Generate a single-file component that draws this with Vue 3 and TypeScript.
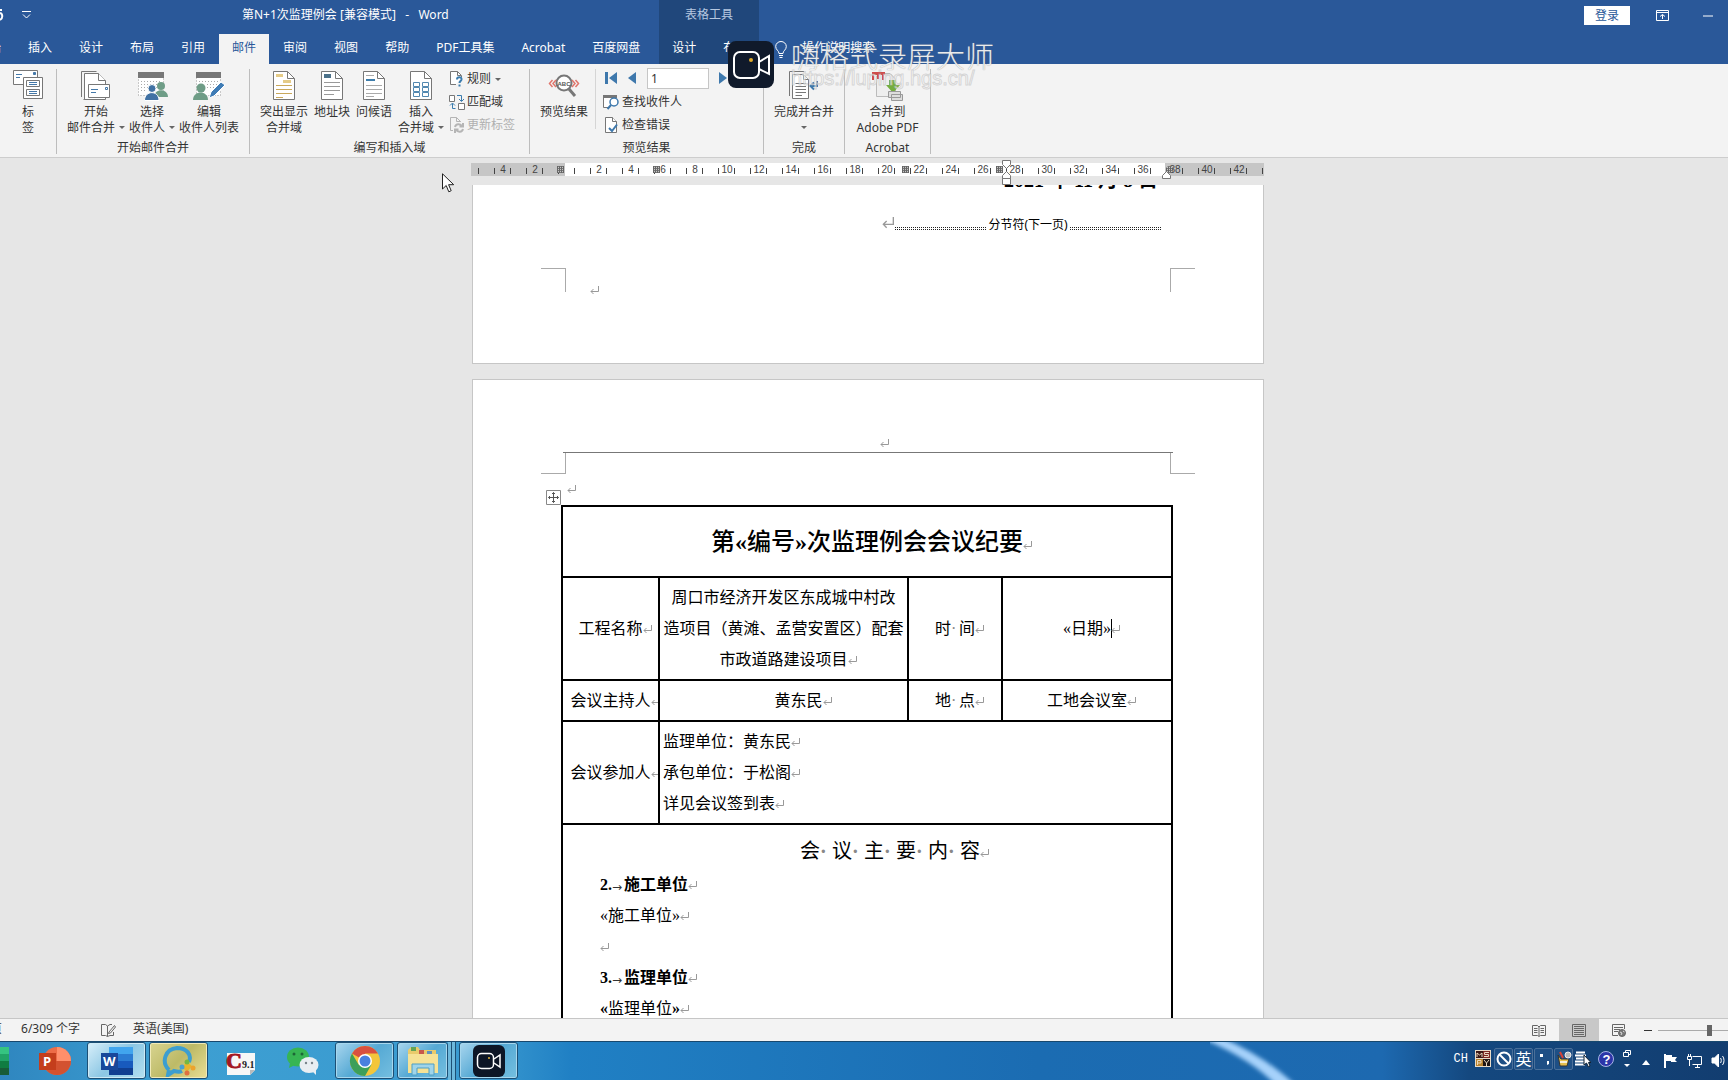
<script setup lang="ts">
import { h, ref } from 'vue'

const mainTabs = ['开始', '插入', '设计', '布局', '引用', '邮件', '审阅', '视图', '帮助', 'PDF工具集', 'Acrobat', '百度网盘']
const activeTab = ref('邮件')
const record = ref('1')
const zoomLevel = ref(50)

// Ruler labels run from -6 to 44 in steps of two; the origin and both ends carry no number.
const rulerCells = Array.from({ length: 26 }, (_, i) => {
  const value = i * 2 - 6
  return value === 0 || value === -6 || value === 44 ? '' : String(Math.abs(value))
})

const attendees = ['监理单位：黄东民', '承包单位：于松阁', '详见会议签到表']
const headingChars = ['会', '议', '主', '要', '内', '容']

// Paragraph mark shown at the end of each paragraph.
const Mark = () =>
  h('svg', { class: 'mark', width: 9, height: 9, viewBox: '0 0 9 9', fill: 'none', stroke: '#999' }, [
    h('path', { d: 'M8.5 0V5.5H1M3.5 3L1 5.5L3.5 8' }),
  ])

const Sheet = () =>
  h('svg', { width: 22, height: 29, viewBox: '0 0 22 29', fill: '#fff', stroke: '#777' }, [
    h('path', { d: 'M.5.5H14.5L21.5 7.5V28.5H.5Z' }),
    h('path', { d: 'M14.5.5V7.5H21.5', fill: 'none' }),
  ])
</script>

<template>
  <div class="app">
    <header class="head">
      <div class="titlebar">
        <div class="quick">
          <svg width="4" height="14" viewBox="0 0 4 14" fill="none" stroke="#fff" stroke-width="2"><path d="M0 2H2M0 12C3 10 3 6 0 5" /></svg>
          <svg class="quick-more" width="9" height="8" viewBox="0 0 9 8" fill="none" stroke="#fff"><path d="M0 .5H9M1 3.5L4.5 7L8 3.5" /></svg>
        </div>
        <div class="doc-title">第N+1次监理例会 [兼容模式]&nbsp;&nbsp; -&nbsp;&nbsp; Word</div>
        <div class="ctx-title">表格工具</div>
        <div class="win">
          <button class="login">登录</button>
          <button class="icon-btn" aria-label="功能区显示选项">
            <svg width="13" height="11" viewBox="0 0 13 11" fill="none" stroke="#fff"><path d="M.5.5H12.5V10.5H.5ZM.5 2.5H12.5M6.5 9V4.5M4 6.5L6.5 4.5L9 6.5" /></svg>
          </button>
          <button class="icon-btn" aria-label="最小化">
            <svg width="10" height="2" viewBox="0 0 10 2"><path d="M0 1H10" stroke="#fff" /></svg>
          </button>
        </div>
      </div>
      <nav class="tabs">
        <button v-for="t in mainTabs" :key="t" class="tab" :class="{ active: t === activeTab }" @click="activeTab = t">{{ t }}</button>
        <div class="ctx-tabs">
          <button class="tab">设计</button>
          <button class="tab">布局</button>
        </div>
        <svg class="bulb" width="12" height="17" viewBox="0 0 12 17" fill="none" stroke="#fff"><path d="M4 12.5C4 9.5.7 9 .7 5.5A5.3 5 0 0 1 11.3 5.5C11.3 9 8 9.5 8 12.5ZM4 14.5H8M4.500 16.500H7.500" /></svg>
        <button class="tell">操作说明搜索</button>
      </nav>
    </header>

    <section class="ribbon">
      <div class="group g-labels">
        <div class="row">
          <button class="big">
            <svg width="32" height="32" viewBox="0 0 32 32" fill="#fff" stroke="#777"><path d="M1.500 1.500H25.500V15.500H1.500Z" /><path d="M4 5.500H10M4 8.500H8" stroke="#4478a8" /><path d="M21.500 3.500H23.500V5.500H21.500Z" fill="#4478a8" stroke="#4478a8" /><path d="M11.500 8.500H30.500V29.500H11.500Z" /><path d="M14.500 11.500H27.500V17.500H14.500ZM14.500 20.500H27.500V26.500H14.500Z" /><path d="M17 13.500H25M17 15.500H25M17 22.500H25M17 24.500H25" stroke="#4478a8" /></svg>
            <span>标<br />签</span>
          </button>
        </div>
      </div>

      <div class="group g-start">
        <div class="row">
          <button class="big">
            <svg width="32" height="32" viewBox="0 0 32 32" fill="#fff" stroke="#777"><path d="M1.500 28V2.500H16.500M5 30.500H3.500" fill="none" /><path d="M4.500 4.500H18.500L25.500 11.500V30.500H4.500Z" /><path d="M18.500 4.500V11.500H25.500" /><path d="M8.500 15.500H29.500V28.500H8.500Z" /><path d="M11 20.500H18M11 23.500H16" stroke="#4478a8" /><path d="M25.500 18.500H27.500V20.500H25.500Z" stroke="#4478a8" /></svg>
            <span>开始<br />邮件合并<i class="caret" /></span>
          </button>
          <button class="big">
            <svg width="32" height="32" viewBox="0 0 32 32"><path d="M2.500 4.500H27.500V26.500H2.500Z" fill="#fff" stroke="#999" stroke-dasharray="1 2" /><path d="M2 3H28V9H2Z" fill="#777" /><path d="M5 12.500H26M5 15.500H26M5 18.500H26M5 21.500H10" stroke="#aaa" stroke-dasharray="1 2" /><g fill="#6f9d87"><circle cx="25" cy="17" r="4" /><path d="M18 28C18 19 32 19 32 28Z" /></g><g fill="#4172a4" stroke="#fff"><path d="M8.500 31.500C8.500 21 23 21 23 31.500Z" /><circle cx="16" cy="19.500" r="4" /></g></svg>
            <span>选择<br />收件人<i class="caret" /></span>
          </button>
          <button class="big">
            <svg width="32" height="32" viewBox="0 0 32 32"><path d="M3.500 4.500H27.500V26.500H3.500Z" fill="#fff" stroke="#999" stroke-dasharray="1 2" /><path d="M3 3H28V9H3Z" fill="#777" /><path d="M6 12.500H26M14 15.500H26M14 18.500H26" stroke="#aaa" stroke-dasharray="1 2" /><g fill="#6f9d87"><circle cx="8" cy="19" r="4.500" /><path d="M0 31C0 21 15 21 15 31Z" /></g><path d="M16 29L18 23L28 13L32 16L21 27Z" fill="#3f7cb5" stroke="#fff" /></svg>
            <span>编辑<br />收件人列表</span>
          </button>
        </div>
        <div class="caption">开始邮件合并</div>
      </div>

      <div class="group g-write">
        <div class="row">
          <button class="big">
            <span class="stack"><Sheet /><svg class="over" width="22" height="29" viewBox="0 0 22 29"><path d="M3 3H10V6H3ZM10 9H18V12H10Z" fill="#e5cb87" /><path d="M3 14.500H19M3 18.500H19M3 22.500H19M3 26.500H10" stroke="#c9a85c" /></svg></span>
            <span>突出显示<br />合并域</span>
          </button>
          <button class="big">
            <span class="stack"><Sheet /><svg class="over" width="22" height="29" viewBox="0 0 22 29"><path d="M3 3H10V7H3Z" fill="#4b7189" /><path d="M3 11.500H19M3 15.500H19M3 19.500H19M3 23.500H13" stroke="#999" /></svg></span>
            <span>地址块</span>
          </button>
          <button class="big">
            <span class="stack"><Sheet /><svg class="over" width="22" height="29" viewBox="0 0 22 29"><path d="M3 8H12V10H3Z" fill="#3e7dab" /><path d="M3 4.500H11M3 14.500H19M3 18.500H19M3 22.500H19M3 25.500H11" stroke="#aaa" /></svg></span>
            <span>问候语</span>
          </button>
          <button class="big">
            <span class="stack"><Sheet /><svg class="over" width="22" height="29" viewBox="0 0 22 29"><path d="M3.500 11.500H9.500V15.500H3.500ZM12.500 11.500H18.500V15.500H12.500ZM3.500 16.500H9.500V20.500H3.500ZM12.500 16.500H18.500V20.500H12.500ZM3.500 21.500H9.500V25.500H3.500ZM12.500 21.500H18.500V25.500H12.500Z" fill="#fff" stroke="#5288b0" /></svg></span>
            <span>插入<br />合并域<i class="caret" /></span>
          </button>
          <div class="smalls">
            <button class="small">
              <svg width="16" height="16" viewBox="0 0 16 16"><path d="M12.500 6V4.500L8.500.500H1.500V13.500H7" fill="#fff" stroke="#777" /><path d="M8.500.500V4.500H12" fill="none" stroke="#777" /><path d="M8 8.500C8 5.500 13 5.500 12.500 8.500C12.200 10 10.500 10 10.500 12M10.500 13.500V15.500" fill="none" stroke="#3b7cae" stroke-width="2" /></svg>
              规则<i class="caret" />
            </button>
            <button class="small">
              <svg width="16" height="16" viewBox="0 0 16 16" fill="#fff" stroke="#777"><path d="M.500 1.500H5.500V7.500H.500ZM9.500 9.500H15.500V15.500H9.500Z" /><path d="M8 1.500H12.500V7M10 5L12.500 7.500L15 5M6.500 14.500H3.500V9.500M1 11.500L3.500 9L6 11.500" fill="none" stroke="#3b7cae" /></svg>
              匹配域
            </button>
            <button class="small" disabled>
              <svg width="16" height="16" viewBox="0 0 16 16" fill="none" stroke="#b5b5b5"><path d="M11.500 5V4.500L7.500.500H1.500V13.500H4M7.500.500V4.500H11.500" /><path d="M6 10C7 6.500 11 6.500 13 9M14 6V9.500H10.500M14 12C13 15.500 9 15.500 7 13M6 16V12.500H9.500" stroke-width="2" /></svg>
              更新标签
            </button>
          </div>
        </div>
        <div class="caption">编写和插入域</div>
      </div>

      <div class="group g-preview">
        <div class="row">
          <button class="big">
            <svg width="32" height="32" viewBox="0 0 32 32" fill="none"><circle cx="16" cy="14" r="7.500" fill="#fff" stroke="#777" stroke-width="2" /><path d="M21 20L27 27" stroke="#777" stroke-width="3" /><path d="M4.500 11L1.500 14.500L4.500 18M8 11L5 14.500L8 18M24 11L27 14.500L24 18M27.500 11L30.500 14.500L27.500 18" stroke="#e0766c" stroke-width="1.500" /><text x="9.500" y="16.500" font-size="6" font-weight="700" fill="#555" font-family="Liberation Sans, sans-serif">ABC</text></svg>
            <span>预览结果</span>
          </button>
          <div class="nav-panel">
            <div class="records">
              <button class="icon-btn" aria-label="首记录"><svg width="12" height="12" viewBox="0 0 12 12" fill="#3e78ac"><path d="M0 0H3V12H0ZM12 0V12L4 6Z" /></svg></button>
              <button class="icon-btn" aria-label="上一记录"><svg width="8" height="12" viewBox="0 0 8 12" fill="#3e78ac"><path d="M8 0V12L0 6Z" /></svg></button>
              <input v-model="record" class="record" aria-label="记录" />
              <button class="icon-btn" aria-label="下一记录"><svg width="8" height="12" viewBox="0 0 8 12" fill="#3e78ac"><path d="M0 0V12L8 6Z" /></svg></button>
            </div>
            <button class="small">
              <svg width="16" height="16" viewBox="0 0 16 16" fill="none"><path d="M7 13.500H.500V1.500H13.500V4" fill="#fff" stroke="#777" /><path d="M0 1H14V4H0Z" fill="#777" /><circle cx="11" cy="8" r="4" fill="#fff" stroke="#3e78ac" stroke-width="1.500" /><path d="M8 11L4.500 15" stroke="#3e78ac" stroke-width="2" /></svg>
              查找收件人
            </button>
            <button class="small">
              <svg width="16" height="16" viewBox="0 0 16 16" fill="#fff" stroke="#777"><path d="M2.500.500H9.500L13.500 4.500V15.500H2.500Z" /><path d="M9.500.500V4.500H13.500" /><path d="M6 11L9 14L14 7.500" fill="none" stroke="#3e78ac" stroke-width="2" /></svg>
              检查错误
            </button>
          </div>
        </div>
        <div class="caption">预览结果</div>
      </div>

      <div class="group g-finish">
        <div class="row">
          <button class="big">
            <svg width="32" height="32" viewBox="0 0 32 32" fill="#fff" stroke="#777"><path d="M1.500 27V2.500H16" fill="none" /><path d="M4.500 5.500H15.500L20.500 10.500V29.500H4.500Z" /><path d="M15.500 5.500V10.500H20.500M7.500 14.500H18M7.500 17.500H18M7.500 20.500H18M7.500 23.500H18M7.500 26.500H14" /><path d="M29 12V17H23M26 13.500L22.500 17L26 20.500" fill="none" stroke="#3e78ac" stroke-width="2" /></svg>
            <span>完成并合并<br /><i class="caret lone" /></span>
          </button>
        </div>
        <div class="caption">完成</div>
      </div>

      <div class="group g-acrobat">
        <div class="row">
          <button class="big">
            <svg width="32" height="32" viewBox="0 0 32 32"><path d="M5.500 7V27.500H24.500V10L19 4.500H14" fill="#eee" stroke="#bbb" /><path d="M1 3H14V6H1ZM1 6H3V11H1ZM6 6H8V10H6ZM11 6H13V11H11Z" fill="#cf4b4b" /><path d="M18 11H25V16H29L22 24L15 16H18Z" fill="#74ad3f" /><path d="M17.500 22.500H29.500V28.500H17.500ZM20.500 25.500H31.500V31.500H20.500Z" fill="#ddd" stroke="#999" /></svg>
            <span>合并到<br />Adobe PDF</span>
          </button>
        </div>
        <div class="caption">Acrobat</div>
      </div>
    </section>

    <main class="workspace">
      <div class="canvas">
        <div class="ruler">
          <div class="scale">
            <div v-for="(c, i) in rulerCells" :key="i" class="cell"><span>{{ c }}</span></div>
          </div>
          <i class="grip grip-a" /><i class="grip grip-b" /><i class="grip grip-c" /><i class="grip grip-d" /><i class="grip grip-e" />
          <svg class="indent-left" width="9" height="25" viewBox="0 0 9 25" fill="#fff" stroke="#777"><path d="M.500.500H8.500V4.500L4.500 8.500L.500 4.500ZM.500 18.500V15.500L4.500 11.500L8.500 15.500V18.500ZM.500 18.500H8.500V24.500H.500Z" /></svg>
          <svg class="indent-right" width="9" height="8" viewBox="0 0 9 8" fill="#fff" stroke="#777"><path d="M.500 7.500V4.500L4.500.500L8.500 4.500V7.500Z" /></svg>
        </div>

        <article class="sheet first">
          <p class="date">2021 年 11 月 8 日</p>
          <p class="break"><Mark class="large" /><i class="dots" /><span>分节符(下一页)</span><i class="dots" /></p>
          <div class="corners"><i class="corner tl" /><Mark /><i class="corner tr" /></div>
        </article>

        <article class="sheet second">
          <p class="header"><Mark /></p>
          <div class="corners lined"><i class="corner bl" /><i class="corner br" /></div>
          <div class="lead">
            <svg width="15" height="15" viewBox="0 0 15 15" fill="none" stroke="#555"><path d="M.500.500H14.500V14.500H.500Z" stroke="#888" /><path d="M7.500 2.500V12.500M2.500 7.500H12.500M6 4L7.500 2.500L9 4M6 11L7.500 12.500L9 11M4 6L2.500 7.500L4 9M11 6L12.500 7.500L11 9" /></svg>
            <Mark />
          </div>
          <table class="minutes">
            <colgroup><col class="c1" /><col class="c2" /><col class="c3" /><col class="c4" /></colgroup>
            <tbody>
              <tr class="r-title"><th colspan="4">第<b>«</b>编号<b>»</b>次监理例会会议纪要<Mark /></th></tr>
              <tr class="r-name">
                <td>工程名称<Mark /></td>
                <td>周口市经济开发区东成城中村改<br />造项目（黄滩、孟营安置区）配套<br />市政道路建设项目<Mark /></td>
                <td>时<i class="dot">·</i>间<Mark /></td>
                <td>«日期»<i class="text-caret" /><Mark /></td>
              </tr>
              <tr class="r-host">
                <td>会议主持人<Mark /></td>
                <td class="indented">黄东民<Mark /></td>
                <td>地<i class="dot">·</i>点<Mark /></td>
                <td>工地会议室<Mark /></td>
              </tr>
              <tr class="r-people">
                <td>会议参加人<Mark /></td>
                <td colspan="3" class="left"><div v-for="a in attendees" :key="a">{{ a }}<Mark /></div></td>
              </tr>
              <tr class="r-body">
                <td colspan="4">
                  <h2><template v-for="(c, i) in headingChars" :key="i">{{ c }}<i v-if="i < 5" class="dot wide">·</i></template><Mark /></h2>
                  <div class="paras">
                    <p><b>2.<i class="tabmark">→</i>施工单位</b><Mark /></p>
                    <p>«施工单位»<Mark /></p>
                    <p><Mark /></p>
                    <p><b>3.<i class="tabmark">→</i>监理单位</b><Mark /></p>
                    <p><b>«</b>监理单位<b>»</b><Mark /></p>
                  </div>
                </td>
              </tr>
            </tbody>
          </table>
        </article>
      </div>
    </main>

    <footer class="status">
      <span class="page-no">页</span>
      <span class="words">6/309 个字</span>
      <svg width="15" height="13" viewBox="0 0 15 13" fill="none" stroke="#666"><path d="M.500.500H4.500L6.500 2V12.500L4.500 11.500H.500ZM6.500 2L9 .500H11M6.500 12.500L9 11.500H12.500V8M8 8L13.500 1.500L14.500 3L9.500 9L7.500 9.500Z" /></svg>
      <span class="lang">英语(美国)</span>
      <div class="views">
        <button class="view" aria-label="阅读视图"><svg width="14" height="13" viewBox="0 0 14 13" fill="none" stroke="#666"><path d="M.500 1.500H5.500L7 3L8.500 1.500H13.500V11.500H8.500L7 12.500L5.500 11.500H.500ZM7 2V12M2 4.500H5.500M2 6.500H5.500M2 8.500H5.500M8.500 4.500H12M8.500 6.500H12M8.500 8.500H12" /></svg></button>
        <button class="view on" aria-label="页面视图"><svg width="14" height="13" viewBox="0 0 14 13" fill="none" stroke="#666"><path d="M.500.500H13.500V12.500H.500ZM2 2.500H12M2 4.500H12M2 6.500H12M2 8.500H12M2 10.500H12" /></svg></button>
        <button class="view" aria-label="Web 版式视图"><svg width="14" height="13" viewBox="0 0 14 13" fill="none" stroke="#666"><path d="M12.500 5V.500H.500V11.500H6M2 3.500H11M2 5.500H8M2 7.500H6" /><circle cx="10" cy="9" r="3.500" fill="#777" /><path d="M8 8L10 9L9 11M11 7L12.500 8" stroke="#ddd" /></svg></button>
        <button class="minus" aria-label="缩小"><svg width="8" height="1" viewBox="0 0 8 1"><path d="M0 0H8V1H0Z" fill="#333" /></svg></button>
        <input v-model="zoomLevel" class="zoom" type="range" min="0" max="100" aria-label="显示比例" />
      </div>
    </footer>

    <div class="taskbar">
      <svg class="beam" width="130" height="38" viewBox="0 0 130 38" fill="none">
        <defs><filter id="soft"><feGaussianBlur stdDeviation="2" /></filter></defs>
        <path d="M8 -6Q60 16 92 50L72 50Q46 18 -14 -6Z" fill="#a6d2fb" filter="url(#soft)" />
      </svg>
      <div class="apps">
        <button class="task" aria-label="Excel"><svg width="32" height="32" viewBox="0 0 32 32"><path d="M8 2H32V9H8Z" fill="#35c481" /><path d="M8 9H32V16H8Z" fill="#21a366" /><path d="M8 16H32V23H8Z" fill="#107c41" /><path d="M8 23H32V30H8Z" fill="#185c37" /></svg></button>
        <button class="task" aria-label="PowerPoint">
          <svg width="32" height="32" viewBox="0 0 32 32"><circle cx="18" cy="16" r="14" fill="#ed6c47" /><path d="M18 2A14 14 0 0 1 32 16H18Z" fill="#ff8f6b" /><path d="M4 16H32A14 14 0 0 1 4 16Z" fill="#d35230" /><rect y="8" width="17" height="17" fill="#c43e1c" /><text x="4" y="21" font-size="13" font-weight="700" fill="#fff" font-family="Open Sans, sans-serif">P</text></svg>
        </button>
        <button class="task open" aria-label="Word">
          <svg width="32" height="32" viewBox="0 0 32 32"><path d="M8 2H32V9H8Z" fill="#41a5ee" /><path d="M8 9H32V16H8Z" fill="#2b7cd3" /><path d="M8 16H32V23H8Z" fill="#185abd" /><path d="M8 23H32V30H8Z" fill="#103f91" /><rect y="8" width="17" height="17" fill="#18479a" /><text x="2" y="21" font-size="13" font-weight="700" fill="#fff" font-family="Open Sans, sans-serif">W</text></svg>
        </button>
        <button class="task open gold" aria-label="企业微信">
          <svg width="34" height="32" viewBox="0 0 34 32" fill="none"><path d="M7 25C-1 17 3 4 15 3C25 3 30 10 27 17M7 25L6 30L12 26C16 27 18 27 20 26" stroke="#3c9ed0" stroke-width="4" /><path d="M25 17L30 21L25 27L20 22Z" fill="#e8b52c" /><circle cx="25" cy="17" r="2.500" fill="#76b840" /><circle cx="31" cy="23" r="2.500" fill="#eda32c" /><circle cx="25" cy="28" r="2.500" fill="#df7040" /><circle cx="20" cy="22" r="2.500" fill="#4aa1cf" /></svg>
        </button>
        <button class="task" aria-label="C 9.1">
          <svg width="30" height="32" viewBox="0 0 30 32"><path d="M1 8H29V25L24 30H1Z" fill="#f7f7f7" /><path d="M24 30V25H29Z" fill="#bbb" /><text x="0" y="23" font-size="22" font-weight="700" fill="#a31623" stroke="#a31623" font-family="Liberation Serif, serif">C</text><text x="16" y="23" font-size="10" font-weight="700" fill="#222" font-family="Liberation Serif, serif">9.1</text></svg>
        </button>
        <button class="task" aria-label="微信">
          <svg width="34" height="30" viewBox="0 0 34 30"><ellipse cx="12" cy="11" rx="11" ry="9.500" fill="#37b553" /><path d="M4 17L3 22L9 19Z" fill="#37b553" /><ellipse cx="23" cy="19" rx="9.500" ry="8" fill="#e9eef2" /><path d="M26 25L30 29L30 23Z" fill="#e9eef2" /><g fill="#1d6636"><circle cx="8" cy="8" r="1.500" /><circle cx="16" cy="8" r="1.500" /></g><g fill="#78848b"><circle cx="20" cy="17" r="1.200" /><circle cx="26" cy="17" r="1.200" /></g></svg>
        </button>
        <button class="task open blue" aria-label="Chrome">
          <svg width="32" height="32" viewBox="0 0 32 32"><circle cx="16" cy="16" r="15" fill="#f3c63b" /><path d="M16 16L3 8.500A15 15 0 0 1 29 8.500H16Z" fill="#d9503f" /><path d="M3 8.500A15 15 0 0 0 16 31L22.500 19.500L9.500 19.500Z" fill="#3c9f59" /><circle cx="16" cy="16" r="7" fill="#fff" /><circle cx="16" cy="16" r="5.500" fill="#4a80df" /></svg>
        </button>
        <div class="stacked">
          <button class="task open blue" aria-label="资源管理器">
            <svg width="32" height="32" viewBox="0 0 32 32"><path d="M1 5L4 2H11L13 5H29V28H1Z" fill="#e9cb6c" /><path d="M4 2H9V6H4Z" fill="#62a455" /><path d="M12 5H17V9H12Z" fill="#c8584c" /><path d="M20 6H25V10H20Z" fill="#5f91bf" /><path d="M1 9H31V28H1Z" fill="#f6e296" /><path d="M5 30V19H27V30H22V23H10V30Z" fill="#9fd4ea" stroke="#4f9fc4" /></svg>
          </button>
          <i /><i />
        </div>
        <button class="task open blue" aria-label="录屏大师">
          <svg width="32" height="32" viewBox="0 0 32 32" fill="none" stroke="#fff" stroke-width="1.500"><rect width="32" height="32" rx="6" fill="#0d1626" stroke="none" /><rect x="4.500" y="8.500" width="16" height="15" rx="4" /><path d="M21 14L27 10V22L21 18" /><circle cx="16" cy="13" r="1" fill="#e6b93c" stroke="none" /></svg>
        </button>
      </div>
      <div class="tray">
        <span class="ch">CH</span>
        <svg class="ime" width="16" height="17" viewBox="0 0 16 17"><path d="M0 0H16V17H0Z" fill="#e9dcc9" /><path d="M1 1H8V8H1Z" fill="#3a1714" /><path d="M8 1H15V8H8Z" fill="#7d2822" /><path d="M1 9H8V16H1Z" fill="#b8832e" /><path d="M8 9H15V16H8Z" fill="#1d1413" /><path d="M2 7V3L4.500 5L7 3V7M14 2.500H9.500V4.500H13.500V6.500H9M2.500 15V10.500H6V13H2.500M9 10L11.500 13L14 10M11.500 13V16" fill="none" stroke="#ead9bf" /></svg>
        <span class="key"><svg width="16" height="16" viewBox="0 0 16 16" fill="none" stroke="#fff" stroke-width="2"><circle cx="8" cy="8" r="6.500" /><path d="M3.500 3.500L12.500 12.500" /></svg></span>
        <span class="key">英</span>
        <span class="key"><svg width="12" height="14" viewBox="0 0 12 14" fill="#fff"><path d="M2 2H5V5H2ZM9 9H11V12L9 13Z" /></svg></span>
        <span class="key"><svg width="16" height="16" viewBox="0 0 16 16"><path d="M2 4L5 8H13L11 15H4Z" fill="#e7c04d" stroke="#333" /><path d="M4 1L7 7" stroke="#d84134" stroke-width="2" /><circle cx="12" cy="4" r="3" fill="#bbb" stroke="#eee" /><path d="M4 11H11" stroke="#f6efdb" stroke-width="2" /></svg></span>
        <svg class="menu-ico" width="16" height="16" viewBox="0 0 16 16"><path d="M1 1.500H10M0 4.500H11M1 7.500H10M0 10.500H11M0 13.500H10" stroke="#fff" stroke-width="2" /><path d="M9 4V14L11.500 12L13.500 16L15 15L13.500 11.500H16Z" fill="#fff" stroke="#123" /></svg>
        <svg class="help" width="16" height="16" viewBox="0 0 16 16"><circle cx="8" cy="8" r="7.500" fill="#2b35a8" stroke="#a9b4e6" /><text x="4.500" y="12.500" font-size="13" font-weight="700" fill="#fff" font-family="Liberation Sans, sans-serif">?</text></svg>
        <svg class="restore" width="8" height="18" viewBox="0 0 8 18" fill="none" stroke="#fff"><path d="M2.500 3V.500H7.500V4.500H5.500M.500 2.500H5.500V6.500H.500Z" /><path d="M1 14H7L4 17Z" fill="#fff" stroke="none" /></svg>
        <svg class="up" width="8" height="5" viewBox="0 0 8 5" fill="#fff"><path d="M0 5H8L4 0Z" /></svg>
        <svg class="flag" width="15" height="15" viewBox="0 0 15 15" fill="#fff"><path d="M1 1H3V15H1ZM3 2H9V4H14L12 7L14 9H8V8H3Z" /></svg>
        <svg class="net" width="15" height="15" viewBox="0 0 15 15" fill="none" stroke="#fff"><path d="M5.500 3.500H14.500V11.500H5.500M8 14.500H13M10.500 12V14M.500 3.500H4.500V6.500H.500ZM1.500 1V3M3.500 1V3M2.500 7V13" /></svg>
        <svg class="vol" width="15" height="15" viewBox="0 0 15 15" fill="none" stroke="#fff"><path d="M1 5H3.500L7.500 1V14L3.500 10H1Z" fill="#fff" /><path d="M9.500 5C10.500 6 10.500 9 9.500 10M11.500 3C13.500 5 13.500 10 11.500 12" /></svg>
      </div>
    </div>

    <div class="watermark">
      <svg width="46" height="47" viewBox="0 0 46 47" fill="none" stroke="#fff" stroke-width="2"><rect width="46" height="47" rx="8" fill="#101a2b" stroke="none" /><rect x="6" y="11" width="25" height="26" rx="6" /><path d="M31 21L41 15V33L31 28" /><circle cx="23" cy="19" r="2" fill="#e0aa2a" stroke="none" /></svg>
      <div class="wm-text"><span class="wm-name">嗨格式录屏大师</span><span class="wm-url">https://luping.hgs.cn/</span></div>
    </div>

    <svg class="pointer" width="13" height="20" viewBox="0 0 13 20"><path d="M.500 .800V16L4.200 12.500L6.800 18.800L9.200 17.700L6.600 11.700H11.700Z" fill="#fff" stroke="#222" /></svg>
  </div>
</template>

<style>
body {
  margin: 0;
}
</style>

<style scoped>
.app {
  position: relative;
  display: flex;
  flex-direction: column;
  height: 100vh;
  overflow: hidden;
  background: #e6e6e6;
  color: #333;
  font: 12px/16px 'Noto Sans', 'Noto Sans CJK SC', sans-serif;
}
button {
  margin: 0;
  padding: 0;
  border: 0;
  background: none;
  color: inherit;
  font: inherit;
}
svg {
  display: block;
  flex: none;
}
p,
h2 {
  margin: 0;
}
i {
  font-style: normal;
}
b {
  font-weight: 700;
}

/* title bar and tabs */
.head {
  flex: none;
  background: #2a5899;
  color: #fff;
}
.titlebar {
  display: flex;
  height: 34px;
}
.quick {
  display: flex;
  align-items: center;
  width: 242px;
  padding-bottom: 4px;
  box-sizing: border-box;
}
.quick-more {
  margin-left: 18px;
}
.doc-title {
  width: 417px;
  padding-top: 7px;
}
.ctx-title {
  width: 100px;
  padding-top: 7px;
  background: #20477b;
  color: #b6c8e0;
  text-align: center;
}
.win {
  display: flex;
  align-items: center;
  gap: 34px;
  height: 31px;
  margin-left: auto;
  padding-right: 15px;
}
.login {
  width: 46px;
  height: 19px;
  margin-right: -8px;
  background: #fff;
  color: #2a5899;
  line-height: 19px;
}
.tabs {
  display: flex;
  gap: 1px;
  height: 30px;
  margin-left: -36px;
}
.tab {
  height: 30px;
  padding: 0 13px 2px;
  white-space: nowrap;
}
.tab.active {
  background: #f3f3f3;
  color: #2a5899;
}
.ctx-tabs {
  display: flex;
  gap: 1px;
  width: 100px;
  margin-left: 5px;
  overflow: hidden;
  background: #20477b;
}
.bulb {
  margin: 7px 14px 0 15px;
}
.tell {
  height: 28px;
}

/* ribbon */
.ribbon {
  display: flex;
  flex: none;
  height: 93px;
  border-bottom: 1px solid #cdcdcd;
  background: #f3f3f3;
}
.group {
  display: flex;
  flex-direction: column;
  justify-content: space-between;
  box-sizing: border-box;
  height: 85px;
  margin-top: 5px;
  border-right: 1px solid #bdbdbd;
}
.row {
  display: flex;
  align-items: flex-start;
}
.big {
  display: flex;
  flex-direction: column;
  align-items: center;
  gap: 3px;
  white-space: nowrap;
}
.big > svg {
  height: 32px;
}
.stack {
  position: relative;
  height: 30px;
  padding-top: 2px;
}
.over {
  position: absolute;
  top: 2px;
  left: 0;
}
.caption {
  text-align: center;
  line-height: 12px;
}
.caret {
  display: inline-block;
  margin-left: 4px;
  border: 3px solid transparent;
  border-top-color: #666;
  border-bottom: 0;
  vertical-align: 3px;
}
.caret.lone {
  margin-left: 0;
}
.g-labels {
  width: 57px;
  padding-left: 12px;
}
.g-start {
  width: 193px;
}
.g-start .row {
  gap: 4px;
  padding-left: 10px;
}
.g-write {
  width: 280px;
}
.g-write .row {
  gap: 6px;
  padding-left: 10px;
}
.g-preview {
  width: 234px;
}
.g-preview .row {
  gap: 7px;
  padding-left: 10px;
}
.g-finish {
  width: 81px;
}
.g-acrobat {
  width: 86px;
}
.g-finish .row,
.g-acrobat .row {
  justify-content: center;
}
.smalls {
  display: flex;
  flex-direction: column;
  gap: 7px;
  margin-left: -1px;
  padding-top: 2px;
}
.small {
  display: flex;
  align-items: center;
  gap: 2px;
  height: 16px;
  white-space: nowrap;
}
.small .caret {
  margin-left: 2px;
}
.small:disabled {
  color: #b0b0b0;
}
.nav-panel {
  display: flex;
  flex-direction: column;
  gap: 7px;
  height: 60px;
  padding-left: 7px;
  border-left: 1px solid #d5d5d5;
}
.records {
  display: flex;
  align-items: center;
  gap: 11px;
  height: 18px;
  padding-left: 2px;
}
.record {
  box-sizing: border-box;
  width: 62px;
  height: 21px;
  margin: 0 -1px 0 0;
  padding: 0 3px;
  border: 1px solid #c6c6c6;
  background: #fff;
  color: #333;
  font: inherit;
}
.nav-panel .small {
  gap: 3px;
}

/* document area */
.workspace {
  display: flex;
  flex: 1;
  justify-content: center;
  min-height: 0;
  padding-left: 8px;
  overflow: hidden;
}
.canvas {
  width: 792px;
  flex: none;
}
.ruler {
  position: relative;
  height: 13px;
  margin: 5px 0 9px -1px;
  background: linear-gradient(90deg, #c6c6c6 94px, #fff 94px, #fff 694px, #c6c6c6 694px);
}
.scale {
  display: flex;
  overflow: hidden;
}
.cell {
  flex: none;
  box-sizing: border-box;
  width: 32px;
  height: 13px;
  background:
    linear-gradient(#444, #444) 7px 5px / 1px 6px no-repeat,
    linear-gradient(#444, #444) 23px 5px / 1px 6px no-repeat;
  color: #444;
  font: 10px/13px 'Liberation Sans', sans-serif;
  text-align: center;
}
.cell:first-child {
  margin-left: -16px;
}
.grip {
  position: absolute;
  top: 3px;
  width: 7px;
  height: 7px;
  background: repeating-linear-gradient(90deg, #666 0 1px, transparent 1px 2px), repeating-linear-gradient(#777 0 1px, #c6c6c6 1px 2px);
}
.grip-a {
  left: 86px;
}
.grip-b {
  left: 182px;
}
.grip-c {
  left: 431px;
}
.grip-d {
  left: 525px;
}
.grip-e {
  left: 695px;
  border-radius: 4px;
}
.indent-left {
  position: absolute;
  top: -3px;
  left: 531px;
}
.indent-right {
  position: absolute;
  top: 8px;
  left: 691px;
}
.sheet {
  box-sizing: border-box;
  overflow: hidden;
  border: 1px solid #c6c6c6;
  background: #fff;
  color: #000;
  font: 16px/31px 'Liberation Serif', 'Noto Sans CJK SC', serif;
}
.first {
  height: 179px;
  border-top: 0;
}
.date {
  height: 19px;
  margin-top: -17px;
  padding-right: 105px;
  font-size: 20px;
  font-weight: 700;
  line-height: 24px;
  text-align: right;
}
.break {
  display: flex;
  align-items: center;
  height: 18px;
  margin: 29px 102px 34px 409px;
  font: 12px/18px 'Noto Sans', 'Noto Sans CJK SC', sans-serif;
}
.break span {
  padding: 0 2px;
}
.dots {
  flex: 1;
  height: 1px;
  margin-top: 6px;
  border-top: 1px dotted #222;
  border-bottom: 1px dotted #222;
}
.mark {
  display: inline-block;
  width: 9px;
  margin-right: -9px;
  vertical-align: 0;
}
.large {
  width: 12px;
  height: 12px;
  margin: -5px 1px 0 0;
}
.corners {
  display: flex;
  justify-content: space-between;
  align-items: flex-end;
  height: 24px;
  padding: 0 68px;
}
.corners .mark {
  margin: 0 auto -3px 24px;
}
.corner {
  box-sizing: border-box;
  width: 25px;
  height: 24px;
  border: 0 solid #aaa;
}
.tl {
  border-width: 1px 1px 0 0;
}
.tr {
  border-width: 1px 0 0 1px;
}
.bl {
  border-width: 0 1px 1px 0;
}
.br {
  border-width: 0 0 1px 1px;
}
.second {
  height: 1120px;
  margin-top: 15px;
}
.header {
  display: flex;
  justify-content: center;
  height: 13px;
  margin: 0 90px;
  padding: 59px 0 0 24px;
  border-bottom: 1px solid #777;
}
.corners.lined {
  height: 21px;
}
.lined .corner {
  height: 21px;
}
.lead {
  display: flex;
  gap: 6px;
  height: 15px;
  margin: 16px 0 0 73px;
}
.lead .mark {
  margin-top: -5px;
}
.minutes {
  width: 612px;
  margin-left: 88px;
  border-collapse: collapse;
  table-layout: fixed;
}
.c1 {
  width: 97px;
}
.c2 {
  width: 249px;
}
.c3 {
  width: 94px;
}
.c4 {
  width: 170px;
}
.minutes th,
.minutes td {
  padding: 0;
  border: 2px solid #000;
  overflow: hidden;
  text-align: center;
  white-space: nowrap;
}
.minutes th {
  padding-top: 2px;
  font-size: 24px;
  font-weight: 500;
}
.r-title {
  height: 71px;
}
.r-name {
  height: 103px;
}
.r-host {
  height: 41px;
}
.r-people {
  height: 103px;
}
.minutes .indented {
  padding-left: 30px;
}
.minutes .left {
  padding-left: 3px;
  text-align: left;
}
.dot {
  display: inline-block;
  width: 8px;
  color: #888;
  text-align: left;
}
.wide {
  width: 12px;
  font-weight: 700;
}
.text-caret {
  display: inline-block;
  width: 1px;
  height: 19px;
  margin-right: -1px;
  background: #000;
  vertical-align: -4px;
}
.r-body h2 {
  padding: 11px 0 2px 46px;
  font-size: 20px;
  font-weight: 400;
}
.paras {
  padding-left: 37px;
  text-align: left;
}
.paras p {
  height: 31px;
}
.tabmark {
  display: inline-block;
  width: 12px;
  height: 16px;
  color: #333;
  font: 12px/16px 'DejaVu Sans', sans-serif;
  vertical-align: -1px;
}

/* status bar */
.status {
  display: flex;
  flex: none;
  align-items: center;
  height: 22px;
  border-top: 1px solid #c6c6c6;
  background: #f3f3f3;
  overflow: hidden;
}
.status span {
  padding-bottom: 2px;
}
.page-no {
  margin-left: -10px;
}
.words {
  margin: 0 21px 0 19px;
}
.lang {
  margin-left: 17px;
}
.views {
  display: flex;
  align-items: center;
  margin: 0 -32px 0 auto;
}
.view {
  display: flex;
  align-items: center;
  justify-content: center;
  width: 40px;
  height: 22px;
}
.view.on {
  background: #c8c8c8;
}
.minus {
  margin: 0 6px 0 5px;
}
.zoom {
  width: 102px;
  height: 12px;
  margin: 0;
  appearance: none;
  background: linear-gradient(#aaa, #aaa) center / 100% 1px no-repeat;
}
.zoom::-webkit-slider-thumb {
  width: 5px;
  height: 11px;
  appearance: none;
  background: #666;
}

/* taskbar */
.taskbar {
  position: relative;
  display: flex;
  flex: none;
  justify-content: space-between;
  height: 38px;
  overflow: hidden;
  border-top: 1px solid #17486e;
  background: linear-gradient(90deg, #2f86bf, #3d9fd2 10%, #3a9ad0 28%, #2080c4 33%, #1b6cb2 60%, #1d69b0 80%, #14487f 85%, #123d70);
}
.beam {
  position: absolute;
  top: 0;
  left: 70%;
}
.apps {
  display: flex;
  gap: 3px;
  margin-left: -37px;
}
.task {
  display: flex;
  align-items: center;
  justify-content: center;
  box-sizing: border-box;
  width: 59px;
  height: 37px;
}
.open {
  border: 1px solid #1c4f75;
  border-radius: 3px;
  background: linear-gradient(135deg, #d8effa, #8cc7e4 50%, #b3dff0);
  box-shadow: inset 0 0 0 1px #cdeaf6;
}
.gold {
  background: linear-gradient(135deg, #d8d490, #bdba67 50%, #ebdf94);
  box-shadow: inset 0 0 0 1px #f0eab8;
}
.blue {
  background: linear-gradient(135deg, #a9d6ee, #55a9d4 50%, #75bfe0);
  box-shadow: inset 0 0 0 1px #a6d7ee;
}
.stacked {
  display: flex;
  width: 59px;
}
.stacked .task {
  width: 52px;
}
.stacked i {
  width: 3px;
  border-right: 1px solid #1c4f75;
  background: #6db8dc;
}
.tray {
  display: flex;
  align-items: center;
  padding: 0 2px 5px 0;
  color: #fff;
}
.ch {
  margin-right: 7px;
  font: 12px/16px 'Liberation Mono', monospace;
}
.ime {
  margin-right: 3px;
}
.key {
  display: flex;
  align-items: center;
  justify-content: center;
  box-sizing: border-box;
  width: 19px;
  height: 22px;
  margin-right: 1px;
  border: 1px solid #4a6f99;
  border-radius: 2px;
  background: #1e4f85;
  font-size: 16px;
}
.menu-ico {
  margin-left: 1px;
}
.help {
  margin: 0 9px 0 7px;
}
.restore {
  margin-right: 11px;
}
.up {
  margin: 8px 13px 0 0;
}
.flag,
.net {
  margin: 4px 9px 0 0;
}
.vol {
  margin-top: 4px;
}

/* recorder overlay and mouse pointer */
.watermark {
  position: absolute;
  top: 41px;
  left: 728px;
  display: flex;
  gap: 17px;
}
.wm-text {
  display: flex;
  flex-direction: column;
  white-space: nowrap;
}
.wm-name {
  height: 27px;
  color: rgba(255, 255, 255, 0.85);
  font-size: 29px;
  font-weight: 300;
  line-height: 32px;
  text-shadow: 0 0 1px #888;
}
.wm-url {
  color: rgba(255, 255, 255, 0.6);
  font: 20px/20px 'Liberation Sans', sans-serif;
  -webkit-text-stroke: 1px rgba(180, 180, 180, 0.5);
}
.pointer {
  position: absolute;
  top: 173px;
  left: 442px;
}
</style>
